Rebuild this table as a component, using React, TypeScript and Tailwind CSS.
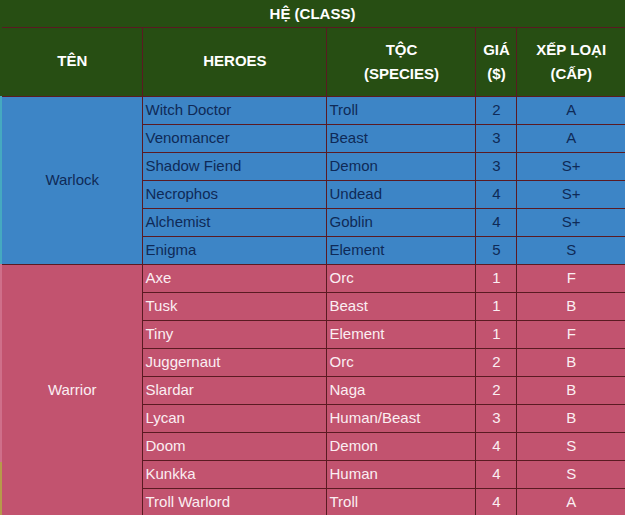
const WARLOCKS = [
  ["Witch Doctor", "Troll", "2", "A"],
  ["Venomancer", "Beast", "3", "A"],
  ["Shadow Fiend", "Demon", "3", "S+"],
  ["Necrophos", "Undead", "4", "S+"],
  ["Alchemist", "Goblin", "4", "S+"],
  ["Enigma", "Element", "5", "S"],
]

const WARRIORS = [
  ["Axe", "Orc", "1", "F"],
  ["Tusk", "Beast", "1", "B"],
  ["Tiny", "Element", "1", "F"],
  ["Juggernaut", "Orc", "2", "B"],
  ["Slardar", "Naga", "2", "B"],
  ["Lycan", "Human/Beast", "3", "B"],
  ["Doom", "Demon", "4", "S"],
  ["Kunkka", "Human", "4", "S"],
  ["Troll Warlord", "Troll", "4", "A"],
]

const cell = "border border-[#5a1a22] p-0 pb-[2px] leading-none"

function Group({ name, rows, tone }: { name: string; rows: string[][]; tone: "blue" | "pink" }) {
  const bg = tone === "blue" ? "bg-[#3d85c6] text-[#0f2a57]" : "bg-[#c2536f] text-[#fbeef2]"
  return (
    <>
      {rows.map((r, i) => (
        <tr key={r[0]} className={`${bg} h-[28px]`}>
          {i === 0 && (
            <td rowSpan={rows.length} className="border border-[#5a1a22] border-l-0 p-0 pb-[2px] text-center leading-none">
              {name}
            </td>
          )}
          <td className={`${cell} pl-[2px]`}>{r[0]}</td>
          <td className={`${cell} pl-[2px]`}>{r[1]}</td>
          <td className={`${cell} text-center`}>{r[2]}</td>
          <td className={`${cell} text-center border-r-0`}>{r[3]}</td>
        </tr>
      ))}
    </>
  )
}

function App() {
  return (
    <main
      className="w-[625px] h-[515px] overflow-hidden bg-white text-[15px]"
      style={{ fontFamily: '"Liberation Sans", Arial, sans-serif' }}
    >
      <div className="flex items-start">
        {/* sliver of the neighbouring column */}
        <div className="flex w-[2px] flex-col">
          <div className="h-[96px] bg-[#274e13]" />
          <div className="h-[168px] bg-[#45a9c0]" />
          <div className="h-[198px] bg-[#cf6f8a]" />
          <div className="h-[60px] bg-[#b79a4a]" />
        </div>
        <table className="w-[623px] table-fixed border-collapse">
          <colgroup>
            <col className="w-[141px]" />
            <col className="w-[184px]" />
            <col className="w-[149px]" />
            <col className="w-[41px]" />
            <col className="w-[108px]" />
          </colgroup>
          <thead className="bg-[#274e13] font-bold text-white">
            <tr className="h-[27px]">
              <th colSpan={5} className="border-b border-[#5a1a22] p-0 pr-[2px] text-center leading-none">
                HỆ (CLASS)
              </th>
            </tr>
            <tr className="h-[69px]">
              <th className="border border-[#5a1a22] border-l-0 p-0">TÊN</th>
              <th className="border border-[#5a1a22] p-0">HEROES</th>
              <th className="border border-[#5a1a22] p-0 leading-[24px]">
                TỘC
                <br />
                (SPECIES)
              </th>
              <th className="border border-[#5a1a22] p-0 leading-[24px]">
                GIÁ
                <br />
                ($)
              </th>
              <th className="border border-[#5a1a22] border-r-0 p-0 leading-[24px]">
                XẾP LOẠI
                <br />
                (CẤP)
              </th>
            </tr>
          </thead>
          <tbody>
            <Group name="Warlock" rows={WARLOCKS} tone="blue" />
            <Group name="Warrior" rows={WARRIORS} tone="pink" />
          </tbody>
        </table>
      </div>
    </main>
  )
}

export default App
